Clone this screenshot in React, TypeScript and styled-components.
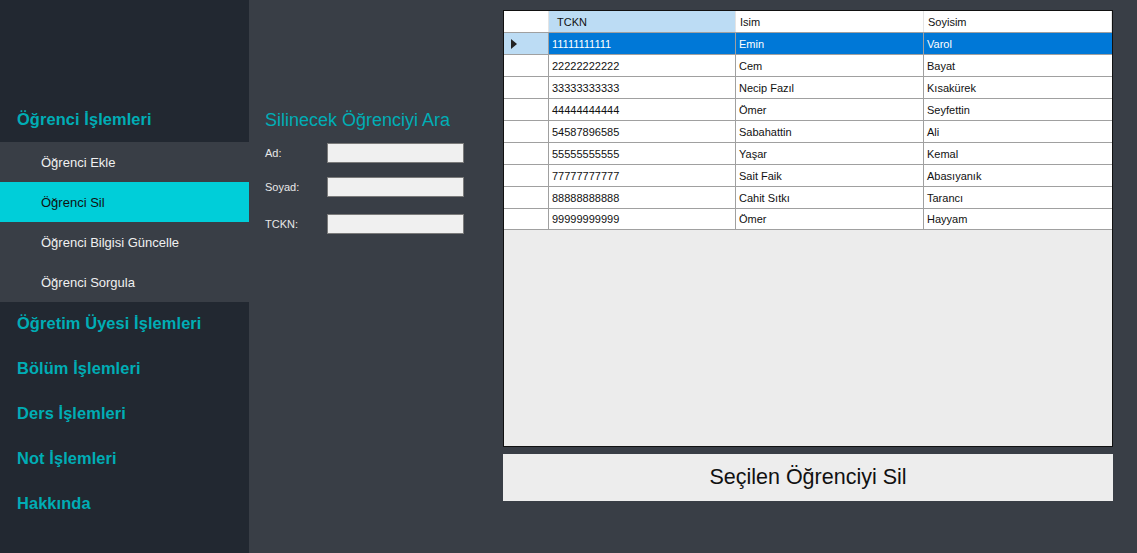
import styled, { createGlobalStyle } from "styled-components";

type Student = { tckn: string; isim: string; soyisim: string };

const students: Student[] = [
  { tckn: "11111111111", isim: "Emin", soyisim: "Varol" },
  { tckn: "22222222222", isim: "Cem", soyisim: "Bayat" },
  { tckn: "33333333333", isim: "Necip Fazıl", soyisim: "Kısakürek" },
  { tckn: "44444444444", isim: "Ömer", soyisim: "Seyfettin" },
  { tckn: "54587896585", isim: "Sabahattin", soyisim: "Ali" },
  { tckn: "55555555555", isim: "Yaşar", soyisim: "Kemal" },
  { tckn: "77777777777", isim: "Sait Faik", soyisim: "Abasıyanık" },
  { tckn: "88888888888", isim: "Cahit Sıtkı", soyisim: "Tarancı" },
  { tckn: "99999999999", isim: "Ömer", soyisim: "Hayyam" },
];

const subItems = [
  "Öğrenci Ekle",
  "Öğrenci Sil",
  "Öğrenci Bilgisi Güncelle",
  "Öğrenci Sorgula",
];

const otherMenus = [
  "Öğretim Üyesi İşlemleri",
  "Bölüm İşlemleri",
  "Ders İşlemleri",
  "Not İşlemleri",
  "Hakkında",
];

const GlobalStyle = createGlobalStyle`
  html, body {
    margin: 0;
    padding: 0;
    background: #393e46;
  }
  * {
    box-sizing: border-box;
  }
`;

function App() {
  return (
    <>
      <GlobalStyle />
      <Window>
        <Sidebar>
          <SideMenuTitle>Öğrenci İşlemleri</SideMenuTitle>
          <SubMenu>
            {subItems.map((item) => (
              <SubMenuItem key={item} $active={item === "Öğrenci Sil"}>
                {item}
              </SubMenuItem>
            ))}
          </SubMenu>
          {otherMenus.map((m) => (
            <SideMenuTitle key={m}>{m}</SideMenuTitle>
          ))}
        </Sidebar>

        <SearchPanel>
          <PanelTitle>Silinecek Öğrenciyi Ara</PanelTitle>
          <FormRow $top={13}>
            <FieldLabel>Ad:</FieldLabel>
            <TextBox />
          </FormRow>
          <FormRow $top={14}>
            <FieldLabel>Soyad:</FieldLabel>
            <TextBox />
          </FormRow>
          <FormRow $top={17}>
            <FieldLabel>TCKN:</FieldLabel>
            <TextBox />
          </FormRow>
        </SearchPanel>

        <GridPanel>
          <DataGrid>
            <HeaderRow>
              <HeaderCorner />
              <HeaderCell $current>TCKN</HeaderCell>
              <HeaderCell>Isim</HeaderCell>
              <HeaderCell>Soyisim</HeaderCell>
            </HeaderRow>
            {students.map((s, i) => (
              <DataRow key={s.tckn} $selected={i === 0}>
                <RowHeader $current={i === 0}>
                  {i === 0 && (
                    <svg width="6" height="10" viewBox="0 0 6 10">
                      <path d="M0 0 L6 5 L0 10 Z" fill="#222" />
                    </svg>
                  )}
                </RowHeader>
                <Cell>{s.tckn}</Cell>
                <Cell>{s.isim}</Cell>
                <Cell>{s.soyisim}</Cell>
              </DataRow>
            ))}
          </DataGrid>
          <DeleteButton>Seçilen Öğrenciyi Sil</DeleteButton>
        </GridPanel>
      </Window>
    </>
  );
}

export default App;

const Window = styled.div`
  display: flex;
  width: 1137px;
  height: 553px;
  background: #393e46;
  font-family: "Liberation Sans", Arial, sans-serif;
  overflow: hidden;
`;

const Sidebar = styled.nav`
  width: 249px;
  flex-shrink: 0;
  background: #222831;
  padding-top: 97px;
  display: flex;
  flex-direction: column;
`;

const SideMenuTitle = styled.div`
  height: 45px;
  flex-shrink: 0;
  display: flex;
  align-items: center;
  padding-left: 17px;
  color: #00adb5;
  font-size: 16.4px;
  font-weight: 700;
  letter-spacing: 0.1px;
`;

const SubMenu = styled.div`
  display: flex;
  flex-direction: column;
  background: #393e46;
  margin-bottom: -1px;
`;

const SubMenuItem = styled.div<{ $active?: boolean }>`
  height: 40px;
  flex-shrink: 0;
  display: flex;
  align-items: center;
  padding-left: 41px;
  font-size: 13px;
  color: ${(p) => (p.$active ? "#111" : "#f0f0f0")};
  background: ${(p) => (p.$active ? "#00ced9" : "transparent")};
`;

const SearchPanel = styled.div`
  width: 254px;
  flex-shrink: 0;
  padding: 108px 0 0 16px;
  display: flex;
  flex-direction: column;
`;

const PanelTitle = styled.div`
  height: 22px;
  line-height: 24px;
  color: #00adb5;
  font-size: 18px;
`;

const FormRow = styled.div<{ $top: number }>`
  display: flex;
  align-items: center;
  margin-top: ${(p) => p.$top}px;
`;

const FieldLabel = styled.span`
  width: 62px;
  font-size: 11px;
  color: #e8e8e8;
`;

const TextBox = styled.div`
  width: 137px;
  height: 20px;
  background: #f0f0f0;
  border: 1px solid #7a7a7a;
`;

const GridPanel = styled.div`
  width: 610px;
  padding-top: 10px;
  display: flex;
  flex-direction: column;
  gap: 7px;
`;

const DataGrid = styled.div`
  height: 437px;
  background: #ececec;
  border: 1px solid #111;
  display: flex;
  flex-direction: column;
`;

const HeaderRow = styled.div`
  display: grid;
  grid-template-columns: 45px 187px 188px 188px;
  height: 21px;
  background: #fff;
`;

const HeaderCorner = styled.div`
  background: #fff;
  border-right: 1px solid #e4e4e4;
`;

const HeaderCell = styled.div<{ $current?: boolean }>`
  display: flex;
  align-items: center;
  padding-left: ${(p) => (p.$current ? 8 : 4)}px;
  font-size: 11px;
  color: #111;
  background: ${(p) => (p.$current ? "#bcdcf4" : "#fff")};
  border-right: 1px solid #e4e4e4;
`;

const DataRow = styled.div<{ $selected?: boolean }>`
  display: grid;
  grid-template-columns: 45px 187px 188px 188px;
  height: 22px;
  background: ${(p) => (p.$selected ? "#0078d7" : "#fff")};
  color: ${(p) => (p.$selected ? "#fff" : "#111")};
  border-top: 1px solid #a0a0a0;
  &:last-child {
    border-bottom: 1px solid #a0a0a0;
  }
`;

const RowHeader = styled.div<{ $current?: boolean }>`
  display: flex;
  align-items: center;
  padding-left: 7px;
  background: ${(p) => (p.$current ? "#bcdcf4" : "#fff")};
  border-right: 1px solid #a0a0a0;
`;

const Cell = styled.div`
  display: flex;
  align-items: center;
  padding-left: 3px;
  font-size: 11px;
  border-right: 1px solid #a0a0a0;
  &:last-child {
    border-right: none;
  }
`;

const DeleteButton = styled.button`
  height: 47px;
  border: none;
  background: #ededed;
  font-family: "Liberation Sans", Arial, sans-serif;
  font-size: 21.5px;
  color: #111;
  padding: 0;
`;
